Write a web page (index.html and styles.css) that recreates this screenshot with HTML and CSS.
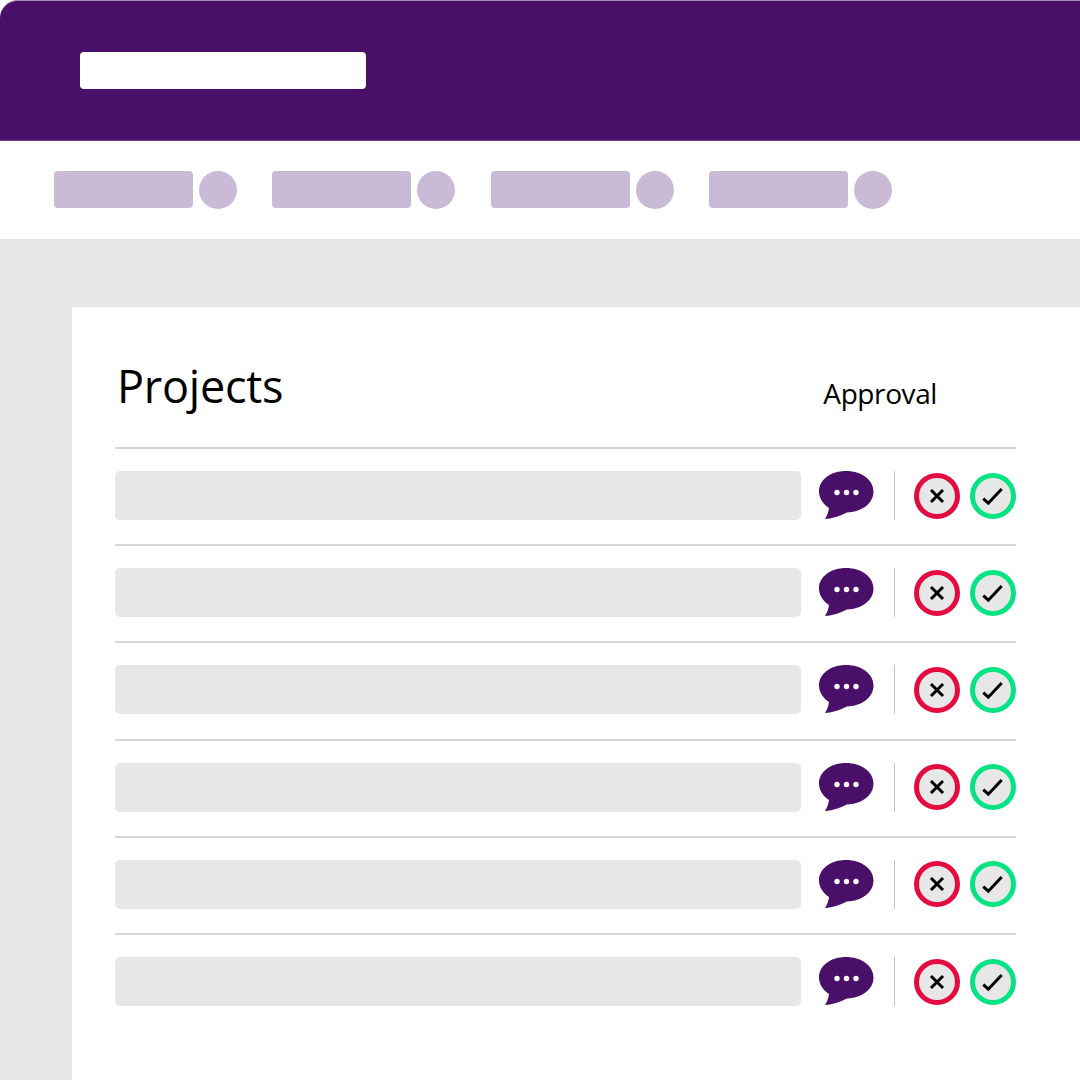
FILE: index.html
```html
<!DOCTYPE html>
<html lang="en">
<head>
    <meta charset="UTF-8">
    <meta name="viewport" content="width=device-width, initial-scale=1.0">
    <title>Projects</title>
    <link rel="stylesheet" href="styles.css">
</head>
<body>
    <svg class="defs" width="0" height="0" aria-hidden="true">
        <symbol id="chat" viewBox="0 0 55 49">
            <path d="M27 0C42 0 54.5 8.5 54.5 20.5 54.5 33 42 41 28 41.5 22 44.5 14 47.5 6 48 8 45 9.5 41 10 37 4 33 0 27 0 20.5 0 8.5 12 0 27 0Z" fill="#4a0f69"/>
            <circle cx="18" cy="21.5" r="2.7" fill="#fff"/>
            <circle cx="27.5" cy="21.5" r="2.7" fill="#fff"/>
            <circle cx="37" cy="21.5" r="2.7" fill="#fff"/>
        </symbol>
    </svg>

    <header class="topbar">
        <div class="logo"></div>
    </header>

    <nav class="tabs">
        <div class="tab"><span class="tab-label"></span><span class="tab-dot"></span></div>
        <div class="tab"><span class="tab-label"></span><span class="tab-dot"></span></div>
        <div class="tab"><span class="tab-label"></span><span class="tab-dot"></span></div>
        <div class="tab"><span class="tab-label"></span><span class="tab-dot"></span></div>
    </nav>

    <main class="content">
        <section class="panel">
            <div class="panel-head">
                <h1>Projects</h1>
                <span class="approval">Approval</span>
            </div>

            <div class="row">
                <div class="row-name"></div>
                <svg class="chat"><use href="#chat"/></svg>
                <span class="divider"></span>
                <span class="status reject"><svg viewBox="0 0 46 46"><path d="M17 17 29 29M29 17 17 29"/></svg></span>
                <span class="status accept"><svg viewBox="0 0 46 46"><path d="M13.3 25.7 18.3 30.2 31.7 16"/></svg></span>
            </div>
            <div class="row">
                <div class="row-name"></div>
                <svg class="chat"><use href="#chat"/></svg>
                <span class="divider"></span>
                <span class="status reject"><svg viewBox="0 0 46 46"><path d="M17 17 29 29M29 17 17 29"/></svg></span>
                <span class="status accept"><svg viewBox="0 0 46 46"><path d="M13.3 25.7 18.3 30.2 31.7 16"/></svg></span>
            </div>
            <div class="row">
                <div class="row-name"></div>
                <svg class="chat"><use href="#chat"/></svg>
                <span class="divider"></span>
                <span class="status reject"><svg viewBox="0 0 46 46"><path d="M17 17 29 29M29 17 17 29"/></svg></span>
                <span class="status accept"><svg viewBox="0 0 46 46"><path d="M13.3 25.7 18.3 30.2 31.7 16"/></svg></span>
            </div>
            <div class="row">
                <div class="row-name"></div>
                <svg class="chat"><use href="#chat"/></svg>
                <span class="divider"></span>
                <span class="status reject"><svg viewBox="0 0 46 46"><path d="M17 17 29 29M29 17 17 29"/></svg></span>
                <span class="status accept"><svg viewBox="0 0 46 46"><path d="M13.3 25.7 18.3 30.2 31.7 16"/></svg></span>
            </div>
            <div class="row">
                <div class="row-name"></div>
                <svg class="chat"><use href="#chat"/></svg>
                <span class="divider"></span>
                <span class="status reject"><svg viewBox="0 0 46 46"><path d="M17 17 29 29M29 17 17 29"/></svg></span>
                <span class="status accept"><svg viewBox="0 0 46 46"><path d="M13.3 25.7 18.3 30.2 31.7 16"/></svg></span>
            </div>
            <div class="row">
                <div class="row-name"></div>
                <svg class="chat"><use href="#chat"/></svg>
                <span class="divider"></span>
                <span class="status reject"><svg viewBox="0 0 46 46"><path d="M17 17 29 29M29 17 17 29"/></svg></span>
                <span class="status accept"><svg viewBox="0 0 46 46"><path d="M13.3 25.7 18.3 30.2 31.7 16"/></svg></span>
            </div>
        </section>
    </main>
</body>
</html>
```

FILE: styles.css
```css
/* General */
html, body {
    height: 100%;
}

body {
    margin: 0;
    background: #fff;
    font-family: "Open Sans", "Liberation Sans", sans-serif;
    color: #000;
    display: flex;
    flex-direction: column;
    overflow: hidden;
}

.defs {
    display: block;
    height: 0;
}

/* Top bar */
.topbar {
    height: 141px;
    background: #4a0f69;
    border-top: 1px solid #a58fb4;
    border-bottom: 1px solid #6e4488;
    border-top-left-radius: 18px;
    padding: 51px 0 0 80px;
    box-sizing: border-box;
    flex: none;
}

.logo {
    width: 286px;
    height: 37px;
    background: #fff;
    border-radius: 4px;
}

/* Tabs */
.tabs {
    height: 98px;
    flex: none;
    box-sizing: border-box;
    padding: 30px 0 0 54px;
    display: flex;
    gap: 35.33px;
}

.tab {
    display: flex;
    gap: 6px;
}

.tab-label {
    width: 139px;
    height: 37px;
    background: #c9bbd6;
    border-radius: 4px;
}

.tab-dot {
    width: 38px;
    height: 38px;
    background: #c9bbd6;
    border-radius: 50%;
}

/* Content */
.content {
    flex: 1;
    background: #e7e7e7;
    padding: 68px 0 0 72px;
    display: flex;
}

.panel {
    flex: 1;
    background: #fff;
    padding: 0 64px 0 43px;
}

.panel-head {
    height: 140px;
    display: flex;
    justify-content: space-between;
}

h1 {
    margin: 49px 0 0 2px;
    font-size: 45px;
    line-height: 60px;
    font-weight: 400;
    letter-spacing: -0.25px;
}

.approval {
    margin: 68px 79px 0 0;
    font-size: 28px;
    line-height: 36px;
    letter-spacing: -0.4px;
}

.row {
    height: 93.2px;
    padding-bottom: 2px;
    border-top: 2px solid #d6d6d6;
    display: flex;
    align-items: center;
}

.row-name {
    width: 686px;
    height: 49px;
    background: #e7e7e7;
    border-radius: 5px;
    flex: none;
}

.chat {
    width: 55px;
    height: 49px;
    margin-left: 18px;
    flex: none;
}

.divider {
    width: 1px;
    height: 49px;
    background: #c4c4c4;
    margin: 0 19px 0 20px;
    flex: none;
}

.status {
    width: 46px;
    height: 46px;
    box-sizing: border-box;
    border: 5px solid;
    border-radius: 50%;
    background: #e7e7e7;
    flex: none;
}

.status svg {
    display: block;
    width: 46px;
    height: 46px;
    margin: -5px;
    fill: none;
    stroke: #000;
    stroke-width: 3;
}

.reject {
    border-color: #e30b3f;
}

.accept {
    border-color: #07e283;
    margin-left: 10px;
}
```
